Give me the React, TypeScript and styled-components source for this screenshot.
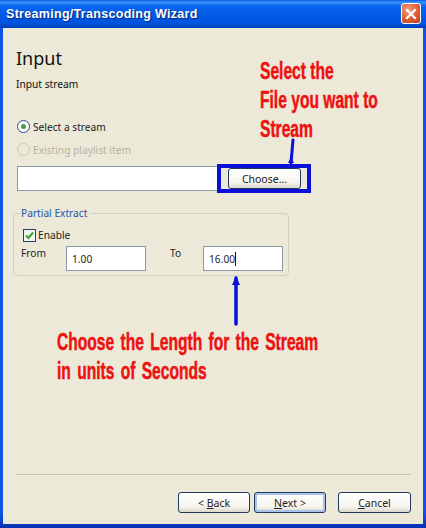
import React from "react";
import styled, { createGlobalStyle } from "styled-components";

const Global = createGlobalStyle`
  html, body { margin: 0; padding: 0; background: #ece9d8; }
  * { box-sizing: border-box; }
`;

const Win = styled.div`
  position: relative;
  width: 426px;
  height: 528px;
  display: flex;
  flex-direction: column;
  background: linear-gradient(180deg, #0a55e6 0%, #0a55e6 97%, #0a2fb0 100%);
  font-family: "Noto Sans", "Liberation Sans", sans-serif;
  font-size: 11px;
  color: #111;
  overflow: hidden;
`;

const TitleBar = styled.div`
  height: 28px;
  flex: none;
  display: flex;
  align-items: center;
  justify-content: space-between;
  padding: 0 5px 1px 6px;
  background: linear-gradient(180deg, #0a5ce0 0%, #3a93ff 8%, #0a64ee 22%, #0058e4 60%, #0053dc 85%, #003cb4 100%);
`;

const Title = styled.span`
  font-family: "Liberation Sans", sans-serif;
  font-weight: 700;
  font-size: 12.5px;
  letter-spacing: 0.3px;
  color: #fff;
  text-shadow: 1px 1px 1px #0a2a80;
`;

const CloseBtn = styled.div`
  width: 20px;
  height: 21px;
  border: 1px solid #fff;
  border-radius: 3px;
  background: radial-gradient(circle at 35% 30%, #f0a080 0%, #dc5c34 55%, #c23a1a 100%);
  display: flex;
  align-items: center;
  justify-content: center;
`;

const Body = styled.div`
  flex: 1;
  margin: 0 3px 4px 3px;
  padding: 20px 12px 11px 13px;
  background: #ece9d8;
  display: flex;
  flex-direction: column;
  min-height: 0;
`;

const Heading = styled.div`
  font-size: 18px;
  line-height: 20px;
  height: 20px;
`;

const Sub = styled.div`
  margin-top: 9px;
  line-height: 15px;
  font-size: 10.2px;
`;

const RadioRow = styled.label<{ $off?: boolean }>`
  display: flex;
  align-items: center;
  gap: 3px;
  height: 15px;
  margin-top: ${(p) => (p.$off ? "8px" : "27px")};
  padding-left: 1px;
  font-size: 10.2px;
  color: ${(p) => (p.$off ? "#b5b2a3" : "#222")};
`;

const Radio = styled.span<{ $off?: boolean }>`
  width: 13px;
  height: 13px;
  flex: none;
  border-radius: 50%;
  border: 1px solid ${(p) => (p.$off ? "#c9c6b6" : "#2b4a78")};
  background: ${(p) => (p.$off ? "#ece9d8" : "#fff")};
  display: flex;
  align-items: center;
  justify-content: center;
  &::after {
    content: "";
    display: ${(p) => (p.$off ? "none" : "block")};
    width: 5px;
    height: 5px;
    border-radius: 50%;
    background: #3f9e3f;
  }
`;

const StreamRow = styled.div`
  margin-top: 7px;
  display: flex;
  align-items: center;
  height: 29px;
`;

const StreamInput = styled.div`
  width: 201px;
  height: 25px;
  margin-left: 1px;
  background: #fff;
  border: 1px solid #8a9aa6;
  margin-top: -1px;
`;

const Frame = styled.div`
  width: 94px;
  height: 29px;
  margin-left: -1px;
  border: 4px solid #0a10d8;
  display: flex;
  align-items: center;
  justify-content: center;
  padding-left: 1px;
`;

const Btn = styled.div<{ $w: number; $focus?: boolean }>`
  width: ${(p) => p.$w}px;
  height: 21px;
  flex: none;
  display: flex;
  align-items: center;
  justify-content: center;
  border: 1px solid #1f3a5c;
  border-radius: 3px;
  background: linear-gradient(180deg, #ffffff 0%, #f6f5ef 70%, #dcd9cc 100%);
  font-size: 10.5px;
  color: #222;
  box-shadow: ${(p) => (p.$focus ? "inset 0 0 0 2px #a9c3ea" : "none")};
  u { text-decoration: underline; }
`;

const Group = styled.fieldset`
  margin: 14px 0 0 -3px;
  padding: 0 0 0 9px;
  width: 276px;
  height: 69px;
  border: 1px solid #d4d0bf;
  border-radius: 4px;
  min-width: 0;
`;

const Legend = styled.legend`
  padding: 0 3px 0 1px;
  margin-left: -3px;
  font-size: 10.2px;
  line-height: 13px;
  color: #2255aa;
`;

const CheckRow = styled.div`
  display: flex;
  align-items: center;
  gap: 2px;
  height: 14px;
  margin-top: 8px;
  margin-left: 0;
  font-size: 10.2px;
  color: #222;
`;

const Check = styled.span`
  width: 13px;
  height: 13px;
  background: #f4f4ee;
  border: 1px solid #24406e;
  display: flex;
  align-items: center;
  justify-content: center;
`;

const RangeRow = styled.div`
  display: flex;
  align-items: flex-start;
  margin: 4px 0 0 -2px;
`;

const RangeLabel = styled.span<{ $w: number; $pad?: number }>`
  width: ${(p) => p.$w}px;
  padding-left: ${(p) => p.$pad ?? 0}px;
  line-height: 15px;
  font-size: 10.2px;
  flex: none;
  color: #222;
`;

const NumField = styled.div`
  width: 80px;
  height: 25px;
  flex: none;
  background: #fff;
  border: 1px solid #8a9aa6;
  padding-left: 5px;
  display: flex;
  align-items: center;
  font-size: 10.2px;
  color: #222;
`;

const Caret = styled.span`
  width: 1px;
  height: 14px;
  background: #111;
`;

const Rule = styled.div`
  margin-top: auto;
  height: 1px;
  background: #c6c3b0;
`;

const Footer = styled.div`
  display: flex;
  justify-content: flex-end;
  gap: 4px;
  margin-top: 17px;
`;

const CancelGap = styled.div`
  width: 4px;
`;

const Note = styled.div<{ $x: number; $y: number; $scale: number; $lh: number; $fs: number; $ws: number }>`
  position: absolute;
  left: ${(p) => p.$x}px;
  top: ${(p) => p.$y}px;
  font-family: "Liberation Sans", sans-serif;
  font-weight: 700;
  font-size: ${(p) => p.$fs}px;
  line-height: ${(p) => p.$lh}px;
  word-spacing: ${(p) => p.$ws}px;
  color: #ee1111;
  white-space: nowrap;
  transform: scaleX(${(p) => p.$scale});
  transform-origin: left top;
  -webkit-text-stroke: 0.5px #ee1111;
`;

const Overlay = styled.svg`
  position: absolute;
  left: 0;
  top: 0;
  pointer-events: none;
`;

export default function App() {
  return (
    <Win>
      <Global />
      <TitleBar>
        <Title>Streaming/Transcoding Wizard</Title>
        <CloseBtn>
          <svg width="12" height="12" viewBox="0 0 12 12">
            <path d="M2 2 L10 10 M10 2 L2 10" stroke="#fff" strokeWidth="2.2" strokeLinecap="square" />
          </svg>
        </CloseBtn>
      </TitleBar>
      <Body>
        <Heading>Input</Heading>
        <Sub>Input stream</Sub>
        <RadioRow>
          <Radio />
          Select a stream
        </RadioRow>
        <RadioRow $off>
          <Radio $off />
          Existing playlist item
        </RadioRow>
        <StreamRow>
          <StreamInput />
          <Frame>
            <Btn $w={73}>Choose...</Btn>
          </Frame>
        </StreamRow>
        <Group>
          <Legend>Partial Extract</Legend>
          <CheckRow>
            <Check>
              <svg width="11" height="11" viewBox="0 0 11 11">
                <path d="M2 5.5 L4.5 8 L9 2.5" fill="none" stroke="#3f9e3f" strokeWidth="2" />
              </svg>
            </Check>
            Enable
          </CheckRow>
          <RangeRow>
            <RangeLabel $w={45}>From</RangeLabel>
            <NumField>1.00</NumField>
            <RangeLabel $w={57} $pad={24}>To</RangeLabel>
            <NumField>
              16.00
              <Caret />
            </NumField>
          </RangeRow>
        </Group>
        <Rule />
        <Footer>
          <Btn $w={72}>&lt;&nbsp;<u>B</u>ack</Btn>
          <Btn $w={72} $focus><u>N</u>ext &gt;</Btn>
          <CancelGap />
          <Btn $w={73}><u>C</u>ancel</Btn>
        </Footer>
      </Body>

      <Note $x={260} $y={56} $scale={0.65} $lh={29} $fs={24} $ws={0}>
        Select the
        <br />
        File you want to
        <br />
        Stream
      </Note>
      <Note $x={57} $y={327} $scale={0.65} $lh={29} $fs={24} $ws={3}>
        Choose the Length for the Stream
        <br />
        in units of Seconds
      </Note>

      <Overlay width="426" height="528">
        <path d="M293 140 L291 163" stroke="#0a10d8" strokeWidth="3" strokeLinecap="round" />
        <path d="M288 163 L294 163 L291 157 Z" fill="#0a10d8" />
        <path d="M236 278 L236 324" stroke="#0a10d8" strokeWidth="3.5" strokeLinecap="round" />
        <path d="M232 285 L240 285 L236 276 Z" fill="#0a10d8" />
      </Overlay>
    </Win>
  );
}
